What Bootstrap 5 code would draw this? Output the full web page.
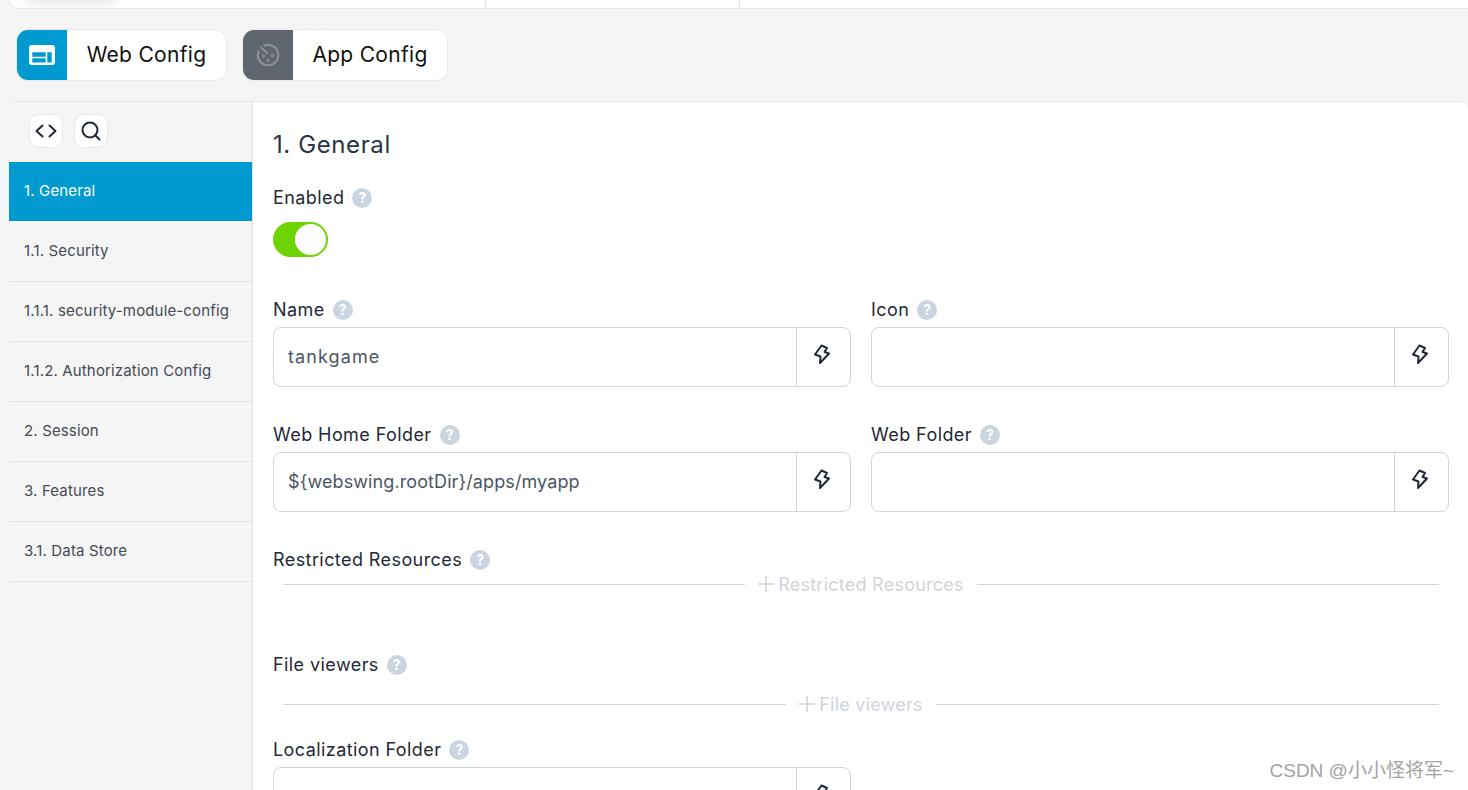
<!DOCTYPE html>
<html lang="en">
<head>
<meta charset="utf-8">
<title>Webswing Config</title>
<link href="https://cdn.jsdelivr.net/npm/bootstrap@5.3.0/dist/css/bootstrap.min.css" rel="stylesheet">
<style>
html,body{height:790px;overflow:hidden}
body{background:#f5f5f5;font-family:Inter,"Liberation Sans",sans-serif;color:#1f2937;position:relative}
.top-strip{height:9px;margin-left:9px;background:#fff;border:1px solid #e6e6e6;border-top:0;border-right:0;border-radius:0 0 0 10px;overflow:hidden;position:relative}
.top-cell{height:100%}
.top-cell.c1{width:476px;border-right:1px solid #e3e3e3}
.top-cell.c2{width:254px;border-right:1px solid #e3e3e3}
.top-blob{position:absolute;left:16px;top:-8px;width:90px;height:12px;border-radius:8px;background:#e9e9e9;filter:blur(5px)}
.tabs-row{padding:20px 0 0 16px;gap:15px;height:92px}
.cfg-tab{height:52px;background:#fff;border:1px solid #e9e9e9;border-radius:12px;overflow:hidden;color:#111;font-size:21px;letter-spacing:.3px;text-decoration:none}
.cfg-ico{width:50px;height:100%}
.ico-web{background:#009ad0}
.ico-app{background:#5f6670}
.tab-web{width:211px}
.tab-app{width:206px}
.tab-text{flex:1;text-align:center}
.shell{margin-left:9px;height:689px;border-top:1px solid #e6e6e6;border-radius:8px 8px 0 0;overflow:hidden}
.side-pane{width:244px;background:#f5f5f5;border-right:1px solid #e2e2e2}
.side-tools{height:60px;padding:12px 0 0 20px;gap:11px}
.tool-btn{width:34px;height:34px;background:#fff;border:1px solid #e8e8e8;border-radius:10px}
.side-link{height:60px;padding:0 0 0 15px;font-size:15px;color:#444b54;border-bottom:1px solid #e2e2e2;text-decoration:none;white-space:nowrap;letter-spacing:.15px}
.side-link.on{background:#009ad0;color:#fff;border-bottom:0;height:59px;margin-bottom:1px;padding-bottom:1px}
.main-pane{background:#fff;padding:0 19px 0 20px;min-width:0}
.pg-title{font-size:24px;font-weight:400;color:#2a3442;margin:28px 0 0;line-height:29px;letter-spacing:.6px}
.fld-label{font-size:18px;line-height:24px;color:#1f2937;gap:8px;height:24px;letter-spacing:.42px;padding-top:2px}
.hint{width:20px;height:20px;border-radius:50%;background:#cbd5e1;color:#fff;font-size:14px;font-weight:700;line-height:20px;text-align:center;flex:none;letter-spacing:0}
.lbl-enabled{margin-top:27px;padding-top:0}
.sw{width:55px;height:35px;border-radius:18px;background:#6dd400;margin-top:12px;position:relative}
.sw::after{content:"";position:absolute;right:2px;top:2px;width:31px;height:31px;border-radius:50%;background:#fff}
.fld-row{gap:20px}
.fld{width:578px}
.lbl-top{margin-top:40px}
.lbl-next{margin-top:35px}
.inp{height:60px;margin-top:6px;border:1px solid #cfd4de;border-radius:8px;background:#fff;overflow:hidden}
.inp-val{flex:1;padding:0 0 2px 14px;font-size:18px;color:#4b5563;letter-spacing:.1px}
.val-wide{letter-spacing:1.1px}
.inp-btn{width:54px;height:100%;border-left:1px solid #cfd4de;padding:0 3px 6px 0}
.add-row{gap:13px;padding:0 10px;height:20px;color:#d0d4dc;font-size:18px;letter-spacing:.25px}
.add-first{margin-top:3px}
.add-second{margin-top:18px}
.add-line{flex:1;height:1px;background:#cfd3dd}
.add-mid{gap:4px;white-space:nowrap}
.lbl-files{margin-top:58px}
.fld-last{margin-top:23px}
.water{position:absolute;right:14px;top:759px;font-family:"Liberation Sans","Noto Sans CJK SC",sans-serif;font-size:19px;line-height:24px;color:#a3a3a3}
</style>
</head>
<body>
<div class="top-strip d-flex"><div class="top-blob"></div><div class="top-cell c1"></div><div class="top-cell c2"></div></div>

<div class="tabs-row d-flex align-items-start">
  <a class="cfg-tab tab-web d-flex align-items-center" href="#">
    <span class="cfg-ico ico-web d-flex align-items-center justify-content-center">
      <svg width="26" height="20" viewBox="0 0 26 20"><path fill="#fff" fill-rule="evenodd" d="M3 0h20a3 3 0 0 1 3 3v14a3 3 0 0 1-3 3H3a3 3 0 0 1-3-3V3a3 3 0 0 1 3-3zM3.300 7.300v4.400h13.400V7.300zm0 6v4.200h13.400v-4.200zm15-6v10.200h4.400V7.300z"/></svg>
    </span>
    <span class="tab-text">Web Config</span>
  </a>
  <a class="cfg-tab tab-app d-flex align-items-center" href="#">
    <span class="cfg-ico ico-app d-flex align-items-center justify-content-center">
      <svg width="24" height="24" viewBox="0 0 24 24" fill="none" stroke="#8b9097" stroke-width="2.200" stroke-linecap="round"><path d="M8.500 2.600A10.200 10.200 0 1 1 2.600 8.500M5 4.500l6 5.500"/><circle cx="7.500" cy="13" r=".6"/><circle cx="16.500" cy="12.500" r=".6"/><circle cx="12" cy="17.500" r=".6"/></svg>
    </span>
    <span class="tab-text">App Config</span>
  </a>
</div>

<div class="shell d-flex">
  <div class="side-pane flex-shrink-0">
    <div class="side-tools d-flex">
      <span class="tool-btn d-flex align-items-center justify-content-center">
        <svg width="22" height="14" viewBox="0 0 22 14" fill="none" stroke="#1f2937" stroke-width="2" stroke-linecap="round" stroke-linejoin="round"><path d="M7.500 1.500 1.500 7l6 5.500M14.500 1.500l6 5.500-6 5.500"/></svg>
      </span>
      <span class="tool-btn d-flex align-items-center justify-content-center">
        <svg width="20" height="20" viewBox="0 0 20 20" fill="none" stroke="#1f2937" stroke-width="2" stroke-linecap="round"><circle cx="9" cy="9" r="7.500"/><path d="m14.500 14.500 4 4"/></svg>
      </span>
    </div>
    <a class="side-link on d-flex align-items-center" href="#">1. General</a>
    <a class="side-link d-flex align-items-center" href="#">1.1. Security</a>
    <a class="side-link d-flex align-items-center" href="#">1.1.1. security-module-config</a>
    <a class="side-link d-flex align-items-center" href="#">1.1.2. Authorization Config</a>
    <a class="side-link d-flex align-items-center" href="#">2. Session</a>
    <a class="side-link d-flex align-items-center" href="#">3. Features</a>
    <a class="side-link d-flex align-items-center" href="#">3.1. Data Store</a>
  </div>
  <div class="main-pane flex-grow-1">
    <h2 class="pg-title">1. General</h2>
    <div class="fld-label lbl-enabled d-flex align-items-center">Enabled <span class="hint">?</span></div>
    <div class="sw"></div>

    <div class="fld-row d-flex lbl-top">
      <div class="fld">
        <div class="fld-label d-flex align-items-center">Name <span class="hint">?</span></div>
        <div class="inp d-flex align-items-center"><span class="inp-val val-wide">tankgame</span><span class="inp-btn d-flex align-items-center justify-content-center"><svg width="24" height="24" viewBox="0 0 24 24" fill="none" stroke="#1f2937" stroke-width="2" stroke-linejoin="round"><path d="M11.500 3.500 17 6l-2.500 4 4.500 1.500-9 9.500.5-6.500-5.500-2z"/></svg></span></div>
      </div>
      <div class="fld">
        <div class="fld-label d-flex align-items-center">Icon <span class="hint">?</span></div>
        <div class="inp d-flex align-items-center"><span class="inp-val"></span><span class="inp-btn d-flex align-items-center justify-content-center"><svg width="24" height="24" viewBox="0 0 24 24" fill="none" stroke="#1f2937" stroke-width="2" stroke-linejoin="round"><path d="M11.500 3.500 17 6l-2.500 4 4.500 1.500-9 9.500.5-6.500-5.500-2z"/></svg></span></div>
      </div>
    </div>

    <div class="fld-row d-flex lbl-next">
      <div class="fld">
        <div class="fld-label d-flex align-items-center">Web Home Folder <span class="hint">?</span></div>
        <div class="inp d-flex align-items-center"><span class="inp-val">${webswing.rootDir}/apps/myapp</span><span class="inp-btn d-flex align-items-center justify-content-center"><svg width="24" height="24" viewBox="0 0 24 24" fill="none" stroke="#1f2937" stroke-width="2" stroke-linejoin="round"><path d="M11.500 3.500 17 6l-2.500 4 4.500 1.500-9 9.500.5-6.500-5.500-2z"/></svg></span></div>
      </div>
      <div class="fld">
        <div class="fld-label d-flex align-items-center">Web Folder <span class="hint">?</span></div>
        <div class="inp d-flex align-items-center"><span class="inp-val"></span><span class="inp-btn d-flex align-items-center justify-content-center"><svg width="24" height="24" viewBox="0 0 24 24" fill="none" stroke="#1f2937" stroke-width="2" stroke-linejoin="round"><path d="M11.500 3.500 17 6l-2.500 4 4.500 1.500-9 9.500.5-6.500-5.500-2z"/></svg></span></div>
      </div>
    </div>

    <div class="fld-label lbl-next d-flex align-items-center">Restricted Resources <span class="hint">?</span></div>
    <div class="add-row add-first d-flex align-items-center">
      <span class="add-line"></span>
      <span class="add-mid d-flex align-items-center"><svg width="16" height="16" viewBox="0 0 16 16" stroke="#d0d4dc" stroke-width="1.600"><path d="M8 0v16M0 8h16"/></svg>Restricted Resources</span>
      <span class="add-line"></span>
    </div>
    <div class="fld-label lbl-files d-flex align-items-center">File viewers <span class="hint">?</span></div>
    <div class="add-row add-second d-flex align-items-center">
      <span class="add-line"></span>
      <span class="add-mid d-flex align-items-center"><svg width="16" height="16" viewBox="0 0 16 16" stroke="#d0d4dc" stroke-width="1.600"><path d="M8 0v16M0 8h16"/></svg>File viewers</span>
      <span class="add-line"></span>
    </div>
    <div class="fld fld-last">
      <div class="fld-label d-flex align-items-center">Localization Folder <span class="hint">?</span></div>
      <div class="inp d-flex align-items-center"><span class="inp-val"></span><span class="inp-btn d-flex align-items-center justify-content-center"><svg width="24" height="24" viewBox="0 0 24 24" fill="none" stroke="#1f2937" stroke-width="2" stroke-linejoin="round"><path d="M11.500 3.500 17 6l-2.500 4 4.500 1.500-9 9.500.5-6.500-5.500-2z"/></svg></span></div>
    </div>
  </div>
</div>
<div class="water">CSDN @小小怪将军~</div>
</body>
</html>
